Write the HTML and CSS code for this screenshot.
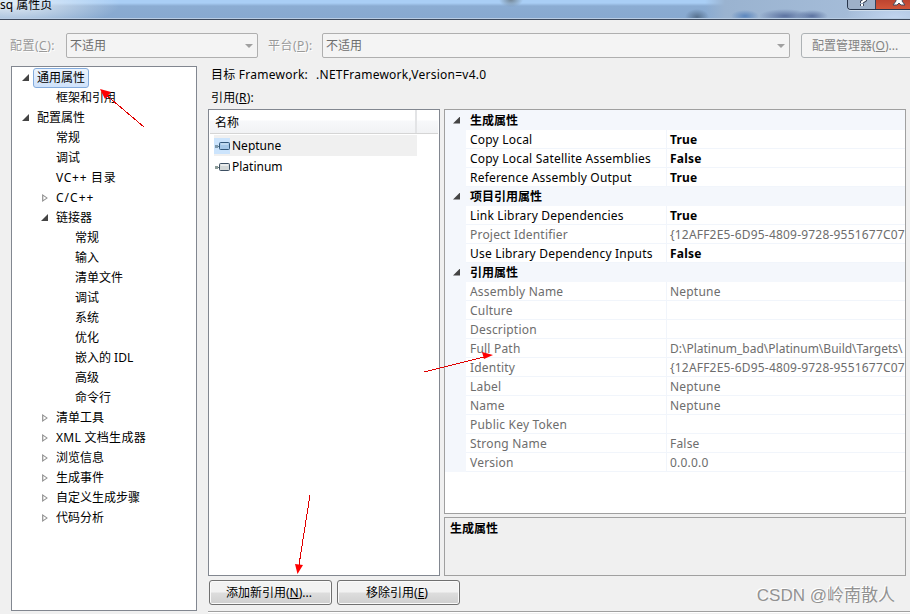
FILE: index.html
```html
<!DOCTYPE html>
<html lang="zh-CN">
<head>
    <meta charset="UTF-8">
    <title>sq 属性页</title>
    <link rel="stylesheet" href="styles.css">
</head>
<body>
<div class="dialog">
    <div class="titlebar">
        <span class="title">sq 属性页</span>
        <div class="win-btns">
            <span class="help"><svg width="28" height="9" viewBox="0 0 28 9"><path d="M17-1v1l-3 2v1M14 4v2" fill="none" stroke="#3d465a" stroke-width="4"/><path d="M17-1v1l-3 2v1M14 4v2" fill="none" stroke="#fff" stroke-width="2"/></svg></span>
            <span class="close"><svg width="34" height="9" viewBox="0 0 34 9"><path d="M20-1h7l-1 2 3 4h-4l-2-2-2 2h-4l3-4z" fill="#fff" stroke="#444b5e"/></svg></span>
        </div>
    </div>

    <div class="config">
        <label class="w1">配置(<u>C</u>):</label>
        <div class="combo c1">不适用<i></i></div>
        <label class="w2">平台(<u>P</u>):</label>
        <div class="combo c2">不适用<i></i></div>
        <div class="manager">配置管理器(<u>O</u>)...</div>
    </div>

    <div class="main">
        <ul class="tree">
            <li><i class="open"></i><span class="selected">通用属性</span></li>
            <li class="l1"><i></i><span>框架和引用</span></li>
            <li><i class="open"></i><span>配置属性</span></li>
            <li class="l1"><i></i><span>常规</span></li>
            <li class="l1"><i></i><span>调试</span></li>
            <li class="l1"><i></i><span class="vc">VC++ 目录</span></li>
            <li class="l1"><i class="shut"></i><span class="cc">C/C++</span></li>
            <li class="l1"><i class="open"></i><span>链接器</span></li>
            <li class="l2"><i></i><span>常规</span></li>
            <li class="l2"><i></i><span>输入</span></li>
            <li class="l2"><i></i><span>清单文件</span></li>
            <li class="l2"><i></i><span>调试</span></li>
            <li class="l2"><i></i><span>系统</span></li>
            <li class="l2"><i></i><span>优化</span></li>
            <li class="l2"><i></i><span>嵌入的 IDL</span></li>
            <li class="l2"><i></i><span>高级</span></li>
            <li class="l2"><i></i><span>命令行</span></li>
            <li class="l1"><i class="shut"></i><span>清单工具</span></li>
            <li class="l1"><i class="shut"></i><span class="xml">XML 文档生成器</span></li>
            <li class="l1"><i class="shut"></i><span>浏览信息</span></li>
            <li class="l1"><i class="shut"></i><span>生成事件</span></li>
            <li class="l1"><i class="shut"></i><span>自定义生成步骤</span></li>
            <li class="l1"><i class="shut"></i><span>代码分析</span></li>
        </ul>

        <div class="page">
            <div class="framework"><span>目标 Framework:</span><span>.NETFramework,Version=v4.0</span></div>
            <div class="ref-label">引用(<u>R</u>):</div>
            <div class="panes">
                <div class="list">
                    <div class="list-head"><span>名称</span></div>
                    <div class="item active">
                        <svg width="16" height="16" viewBox="0 0 16 16"><path d="M1 7h3v3H1z" fill="#7d99ad"/><path d="M4 8.500h2" stroke="#5b7c92"/><rect x="5.500" y="4.500" width="10" height="7" rx="1" fill="#a6c8e8" stroke="#34587a"/><path d="M7 6h7" stroke="#dcecf8"/></svg>
                        <span>Neptune</span>
                    </div>
                    <div class="item">
                        <svg width="16" height="16" viewBox="0 0 16 16"><path d="M1 7h3v3H1z" fill="#8c9c98"/><path d="M4 8.500h2" stroke="#657579"/><rect x="5.500" y="4.500" width="10" height="7" rx="1" fill="#d3d8d8" stroke="#3c4f62"/><path d="M7 6h7" stroke="#fff"/></svg>
                        <span>Platinum</span>
                    </div>
                </div>
                <div class="props">
                    <div class="grid">
                        <div class="cat"><i class="open"></i>生成属性</div>
                        <div class="row on"><span>Copy Local</span><b>True</b></div>
                        <div class="row on"><span>Copy Local Satellite Assemblies</span><b>False</b></div>
                        <div class="row on"><span>Reference Assembly Output</span><b>True</b></div>
                        <div class="cat"><i class="open"></i>项目引用属性</div>
                        <div class="row on"><span>Link Library Dependencies</span><b>True</b></div>
                        <div class="row"><span>Project Identifier</span><b class="id">{12AFF2E5-6D95-4809-9728-9551677C07</b></div>
                        <div class="row on"><span>Use Library Dependency Inputs</span><b>False</b></div>
                        <div class="cat"><i class="open"></i>引用属性</div>
                        <div class="row"><span>Assembly Name</span><b>Neptune</b></div>
                        <div class="row"><span>Culture</span><b></b></div>
                        <div class="row"><span>Description</span><b></b></div>
                        <div class="row"><span>Full Path</span><b class="path">D:\Platinum_bad\Platinum\Build\Targets\</b></div>
                        <div class="row"><span>Identity</span><b class="id">{12AFF2E5-6D95-4809-9728-9551677C07</b></div>
                        <div class="row"><span>Label</span><b>Neptune</b></div>
                        <div class="row"><span>Name</span><b>Neptune</b></div>
                        <div class="row"><span>Public Key Token</span><b></b></div>
                        <div class="row"><span>Strong Name</span><b>False</b></div>
                        <div class="row"><span>Version</span><b>0.0.0.0</b></div>
                    </div>
                    <div class="desc">生成属性</div>
                </div>
            </div>
            <div class="actions">
                <div class="btn">添加新引用(<u>N</u>)...</div>
                <div class="btn">移除引用(<u>E</u>)</div>
            </div>
            <div class="rule"></div>
        </div>
    </div>

    <svg class="arrows" width="910" height="614" viewBox="0 0 910 614">
        <g stroke="#e00000" fill="none" shape-rendering="crispEdges">
            <path d="M144 127L105 94M424 372L484 357M310 495L299 565"/>
        </g>
        <path d="M100 89l11 3-6 7zM493 355l-11-3 2 7zM297.500 574l-2.500-10 8 1z" fill="#f00"/>
    </svg>
    <div class="watermark">CSDN @岭南散人</div>
</div>
</body>
</html>
```
FILE: styles.css
```css
*{
    margin: 0;
    padding: 0;
    box-sizing: border-box;
}
body{
    width: 910px;
    height: 614px;
    overflow: hidden;
    background: #f0f0f0;
    font: 12px/20px "Noto Sans", "Noto Sans CJK SC", sans-serif;
    color: #000;
    white-space: nowrap;
}
ul{
    list-style: none;
}
u{
    text-underline-offset: 1px;
    text-decoration-skip-ink: none;
}
.dialog{
    position: relative;
    height: 614px;
    overflow: hidden;
}

/* 标题栏 */
.titlebar{
    display: flex;
    justify-content: space-between;
    height: 20px;
    background:
        radial-gradient(ellipse 110px 26px at 10px 4px, rgba(235,242,247,.9), transparent),
        radial-gradient(ellipse 12px 7px at 511px 0, #75899a, transparent),
        radial-gradient(ellipse 12px 8px at 697px 17px, #57718f, transparent),
        radial-gradient(ellipse 14px 6px at 745px 16px, #5b86bd, transparent),
        radial-gradient(ellipse 26px 7px at 785px 16px, #5b72a0, transparent),
        radial-gradient(ellipse 16px 6px at 812px 16px, #5b72a0, transparent),
        radial-gradient(ellipse 50px 20px at 895px 18px, #c2d5ef, transparent),
        linear-gradient(90deg, transparent 705px, #9ab3d0 725px, #a9c0dc),
        linear-gradient(#a9cef5 3px, #8bacd2 6px, #87a9d0);
    border-bottom: 1px solid #3d4a5d;
    box-shadow: inset 0 -1px #b9cde4;
}
.title{
    margin-top: -5px;
}
.win-btns{
    display: flex;
    width: 63px;
    height: 10px;
    border: 1px solid #27354b;
    border-width: 0 0 1px 1px;
    border-radius: 0 0 0 4px;
    box-shadow: 0 1px #cfddec;
    overflow: hidden;
}
.win-btns svg{
    display: block;
}
.help{
    width: 28px;
    background: #9eb0c8;
    border-right: 1px solid #34435c;
}
.close{
    flex: 1;
    background: linear-gradient(#bd4430, #d2563a);
}

/* 配置行 */
.config{
    display: flex;
    height: 46px;
    padding: 13px 0 0 10px;
    line-height: 25px;
}
.config > *{
    flex-shrink: 0;
}
.config label{
    color: #999;
    text-shadow: 1px 1px #fff;
    letter-spacing: .5px;
}
.w1{
    width: 56px;
}
.w2{
    width: 54px;
}
.combo{
    display: flex;
    justify-content: space-between;
    align-items: center;
    height: 25px;
    padding: 0 4px 0 3px;
    border: 1px solid #afafaf;
    border-radius: 2px;
    background: #f4f4f4;
    color: #6d6d6d;
}
.combo i{
    border: 4px solid transparent;
    border-top-color: #a0a0a0;
    border-bottom: 0;
}
.c1{
    width: 192px;
    margin-right: 10px;
}
.c2{
    width: 468px;
    margin-right: 11px;
}
.manager{
    width: 112px;
    height: 25px;
    padding-left: 10px;
    border: 1px solid #adb2b5;
    border-radius: 3px;
    background: #f4f4f4;
    line-height: 23px;
    color: #838383;
}

.main{
    display: flex;
    padding-left: 11px;
}

/* 左侧树 */
.tree{
    width: 186px;
    height: 545px;
    padding-top: 1px;
    border: 1px solid #828790;
    background: #fff;
}
.tree li{
    display: flex;
    align-items: center;
    height: 20px;
    padding-left: 10px;
}
.tree .l1{
    padding-left: 29px;
}
.tree .l2{
    padding-left: 48px;
}
.tree i{
    width: 7px;
    height: 8px;
    margin-right: 8px;
}
.tree .selected{
    height: 20px;
    margin: 0 -4px;
    padding: 0 3px;
    border: 1px solid #84acdd;
    border-radius: 3px;
    background: linear-gradient(#edf4fd, #cfe2fb);
    line-height: 18px;
}
.open{
    background: #444;
    clip-path: polygon(100% 0, 100% 88%, 0 88%);
}
.tree .shut{
    width: 8px;
    margin-right: 7px;
    background: #8f8f8f;
    clip-path: polygon(evenodd, 14% 0, 86% 50%, 14% 100%, 14% 0, 29% 26%, 29% 74%, 66% 50%, 29% 26%);
}
.vc{
    letter-spacing: .7px;
}
.cc{
    letter-spacing: 1px;
}
.xml{
    letter-spacing: .3px;
}

/* 右侧页面 */
.page{
    flex: 1;
    margin-left: 11px;
}
.framework, .ref-label{
    padding-left: 3px;
}
.framework{
    display: flex;
    gap: 8px;
    height: 21px;
    line-height: 18px;
    letter-spacing: .25px;
}
.ref-label{
    height: 22px;
    line-height: 22px;
    letter-spacing: .15px;
}
.panes{
    display: flex;
    gap: 4px;
}
.list{
    width: 232px;
    height: 467px;
    padding-left: 1px;
    border: 1px solid #828790;
    background: #fff;
}
.list-head{
    height: 24px;
    margin-right: 1px;
    border-bottom: 1px solid #d5d5d5;
    background: linear-gradient(#fff 10px, #f7f8fa 11px, #f1f2f4);
}
.list-head span{
    display: block;
    width: 207px;
    height: 23px;
    padding-left: 5px;
    border-right: 2px solid #e3e4e6;
    line-height: 26px;
}
.item{
    display: flex;
    align-items: center;
    width: 203px;
    height: 21px;
    margin-left: 4px;
}
.list-head + .item{
    margin-top: 1px;
}
.item span{
    padding-left: 2px;
}
.active{
    background: #f0f0f0;
}
.active svg{
    background: #cce4fc;
}

.props{
    width: 462px;
}
.grid{
    height: 405px;
    padding-top: 1px;
    border: 1px solid #a0a0a0;
    background: linear-gradient(#f4f7fc, #f4f7fc) 0 0 / 100% 1px no-repeat #fff;
    overflow: hidden;
}
.cat{
    display: flex;
    align-items: center;
    height: 19px;
    background: #f4f7fc;
    font-weight: bold;
}
.cat i{
    width: 7px;
    height: 8px;
    margin: 0 10px 0 8px;
}
.row{
    display: flex;
    height: 19px;
    padding-left: 21px;
    background: linear-gradient(90deg, #f4f7fc 21px, #fff 21px);
    line-height: 19px;
    color: #6d6d6d;
    letter-spacing: .2px;
}
.row span{
    width: 201px;
    padding-left: 4px;
    border-right: 1px solid #f1f5fb;
    border-bottom: 1px solid #f1f5fb;
}
.row b{
    flex: 1;
    min-width: 0;
    padding-left: 3px;
    border-bottom: 1px solid #f1f5fb;
    font-weight: normal;
    overflow: hidden;
}
.row .id{
    letter-spacing: .2px;
}
.row .path{
    letter-spacing: 0;
}
.on{
    color: #000;
}
.on b{
    font-weight: bold;
}
.desc{
    height: 59px;
    margin-top: 3px;
    padding: 1px 5px;
    border: 1px solid #a0a0a0;
    font-weight: bold;
}

.actions{
    display: flex;
    gap: 5px;
    padding: 4px 0 0 1px;
}
.btn{
    width: 123px;
    height: 25px;
    padding-right: 3px;
    border: 1px solid #707070;
    border-radius: 3px;
    background: linear-gradient(#f2f2f2 11px, #dddddd 12px, #cfcfcf);
    box-shadow: inset 0 0 0 1px #fafafa;
    line-height: 23px;
    text-align: center;
}
.rule{
    height: 2px;
    margin-top: 6px;
    border-top: 1px solid #a0a0a0;
    background: #fff;
}

.arrows{
    position: absolute;
    left: 0;
    top: 0;
}
.watermark{
    position: absolute;
    right: 15px;
    bottom: 6px;
    font: 17px/24px "Liberation Sans", "Noto Sans CJK SC", sans-serif;
    color: #929292;
    text-shadow: -1px -1px #fff;
}
```
